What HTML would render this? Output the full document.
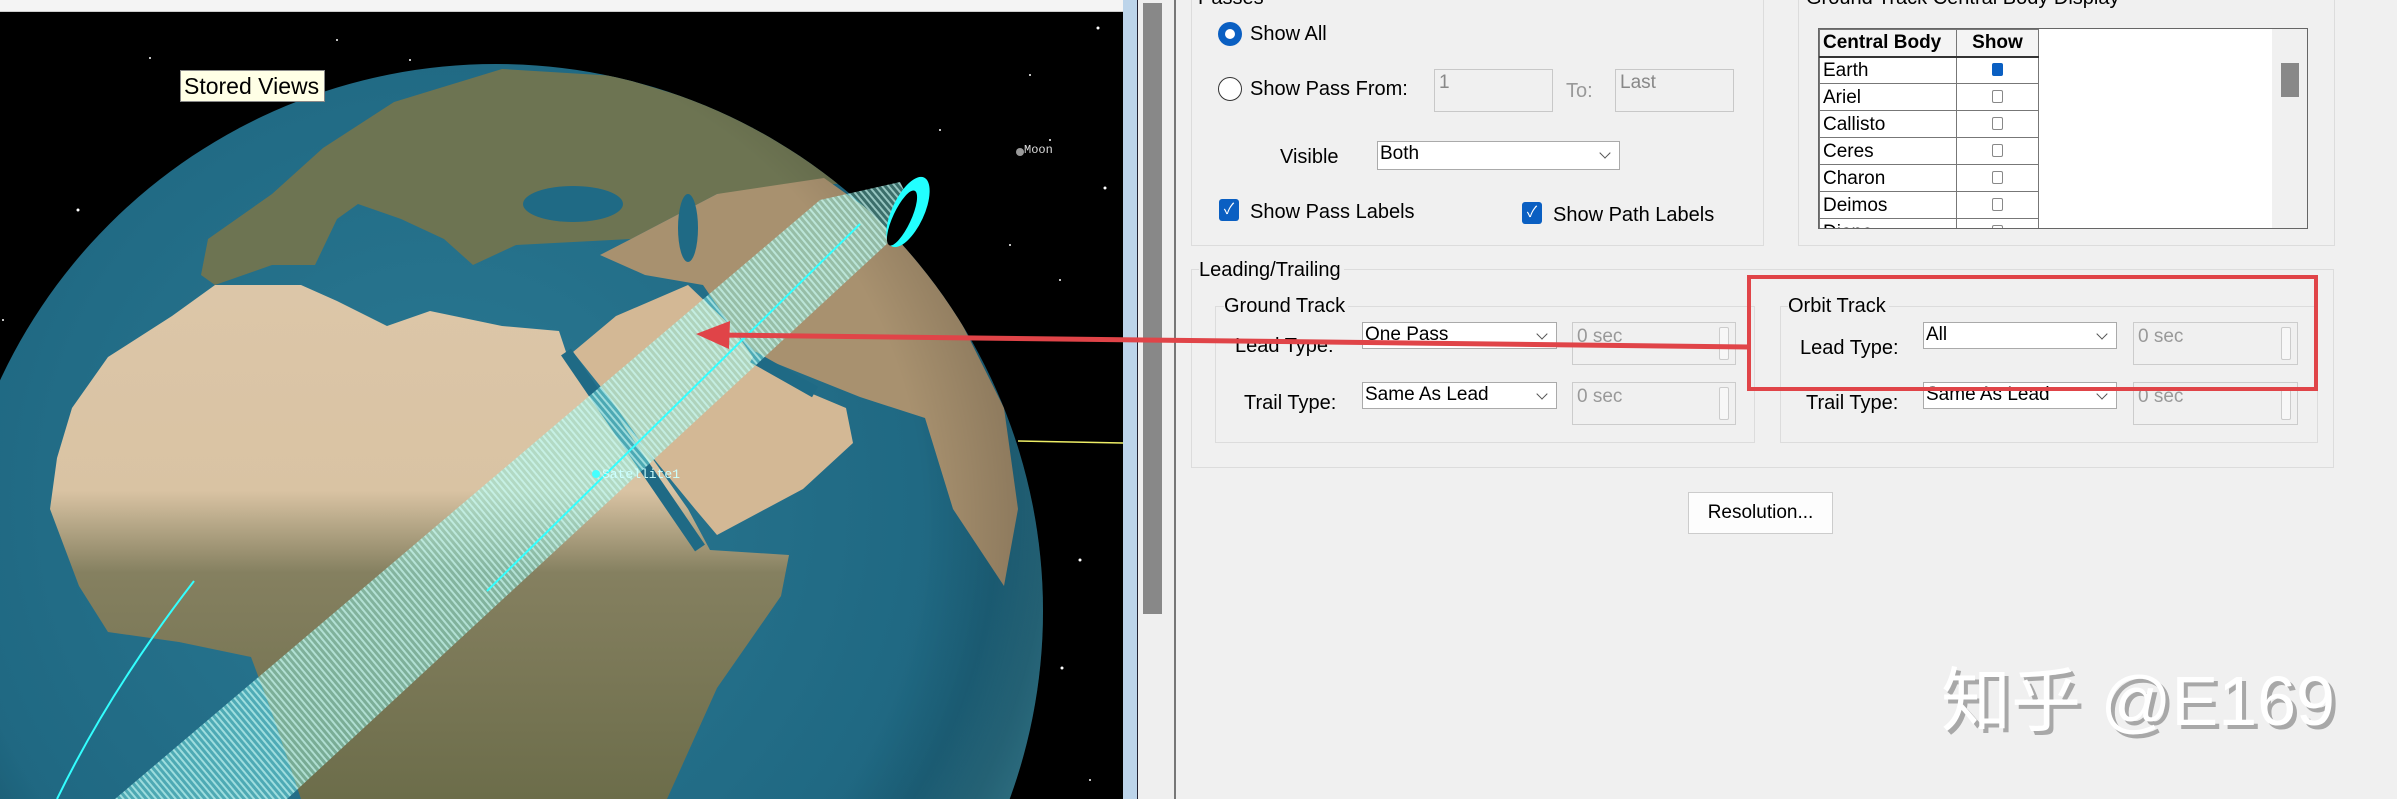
<!DOCTYPE html>
<html style="overflow:hidden"><head><meta charset="utf-8"><style>
*{margin:0;padding:0;box-sizing:border-box}
body{width:2397px;height:799px;overflow:hidden;background:#f0f0f0;font-family:"Liberation Sans","Noto Sans CJK SC",sans-serif;position:relative;color:#000}
.a{position:absolute}
.t{position:absolute;font-size:20px;white-space:nowrap;line-height:1}
.box{position:absolute;border:1px solid #dcdcdc}
.inp{position:absolute;background:#f0f0f0;border:1px solid #c8c8c8;font-size:19px;color:#888;padding:2px 4px}
.sel{position:absolute;background:#fff;border:1px solid #aaa;font-size:19px;padding:1px 2px;line-height:22px}
.sel:after{content:"";position:absolute;right:10px;top:7px;width:7px;height:7px;border-right:1px solid #555;border-bottom:1px solid #555;transform:rotate(45deg)}
.spin{position:absolute;border:1px solid #ccc;background:#f0f0f0;font-size:19px;color:#999;padding:3px 4px}
.spin i{position:absolute;right:6px;top:4px;width:10px;bottom:4px;border:1px solid #ccc;border-radius:2px;background:#f7f7f7}
.cb{position:absolute;width:20px;height:22px;background:#0a5fc2;border-radius:3px;color:#fff;font-size:15px;text-align:center;line-height:22px}
table{border-collapse:collapse}
td{border:1px solid #777;font-size:19px;height:27px;padding:0 3px;line-height:25px}
</style></head><body>
<div class="a" style="left:0;top:0;width:1123px;height:799px;background:#000;overflow:hidden">
<svg width="1123" height="799" style="position:absolute;left:0;top:0">
<defs>
<radialGradient id="oc" cx="0.45" cy="0.4" r="0.6"><stop offset="0" stop-color="#2b7a94"/><stop offset="0.85" stop-color="#1e6680"/><stop offset="1" stop-color="#3a8aa0"/></radialGradient>
<radialGradient id="sh" cx="0.45" cy="0.42" r="0.55"><stop offset="0.8" stop-color="#000" stop-opacity="0"/><stop offset="1" stop-color="#000" stop-opacity="0.2"/></radialGradient>
<linearGradient id="af" x1="0" y1="0" x2="0" y2="1"><stop offset="0" stop-color="#dcc6a8"/><stop offset="0.4" stop-color="#d9c3a3"/><stop offset="0.56" stop-color="#858060"/><stop offset="1" stop-color="#6c6d4a"/></linearGradient>
<pattern id="st" width="5" height="5" patternUnits="userSpaceOnUse" patternTransform="rotate(-40)"><rect width="5" height="5" fill="rgba(130,245,235,0.45)"/><rect width="2" height="5" fill="rgba(210,255,250,0.6)"/></pattern>
<clipPath id="gc"><circle cx="496" cy="611" r="547"/></clipPath>
</defs>
<g fill="#fff"><circle cx="1098" cy="28" r="1.5"/><circle cx="1105" cy="188" r="1.5"/><circle cx="1030" cy="75" r="1"/><circle cx="940" cy="130" r="1"/><circle cx="1060" cy="280" r="1"/><circle cx="1080" cy="560" r="1.5"/><circle cx="1062" cy="668" r="1.5"/><circle cx="1090" cy="780" r="1"/><circle cx="337" cy="40" r="1"/><circle cx="150" cy="58" r="1"/><circle cx="78" cy="210" r="1.5"/><circle cx="3" cy="320" r="1"/><circle cx="1010" cy="245" r="1"/><circle cx="1050" cy="140" r="1"/><circle cx="410" cy="60" r="1"/></g>
<circle cx="496" cy="611" r="547" fill="url(#oc)"/>
<g clip-path="url(#gc)">
<path d="M208,239 L272,194 L323,148 L394,102 L502,69 L616,76 L717,107 L803,153 L846,183 L717,194 L631,239 L516,245 L473,265 L444,239 L401,219 L358,204 L337,219 L315,265 L272,265 L215,285 L201,275 Z" fill="#6d7452"/>
<path d="M631,239 L717,194 L824,178 L896,229 L953,306 L1004,408 L1018,509 L1004,586 L953,509 L925,418 L860,397 L810,377 L760,357 L731,326 L703,285 L645,275 L600,255 Z" fill="#a8916f"/>
<path d="M172,316 L215,285 L301,285 L337,301 L387,326 L430,311 L502,326 L559,331 L566,352 L609,408 L645,448 L688,509 L710,550 L789,555 L781,596 L717,688 L667,799 L301,799 L272,713 L251,657 L179,642 L108,632 L79,586 L50,509 L57,458 L72,408 L108,357 Z" fill="url(#af)"/>
<path d="M616,316 L688,285 L731,326 L760,367 L796,387 L846,408 L853,443 L803,489 L717,535 L695,509 L645,448 L609,397 L573,352 Z" fill="#d3b895"/>
<g fill="#1f6a85">
<ellipse cx="573" cy="204" rx="50" ry="18"/>
<ellipse cx="688" cy="228" rx="10" ry="34"/>
<path d="M566,352 L700,548" stroke="#1f6a85" stroke-width="12"/>
<path d="M753,357 L815,392" stroke="#1f6a85" stroke-width="12"/>
</g>
</g>
<circle cx="496" cy="611" r="547" fill="url(#sh)"/>
<polygon points="820,200 900,182 917,216 287,799 115,799" fill="url(#st)"/>
<path d="M860,224 L487,591" stroke="#3ff" stroke-width="2"/>
<path d="M194,581 Q110,690 57,799" stroke="#3ff" stroke-width="2" fill="none"/>
<ellipse cx="908" cy="212" rx="16" ry="38" transform="rotate(25 908 212)" fill="#2ff"/>
<ellipse cx="902" cy="218" rx="9" ry="30" transform="rotate(25 902 218)" fill="#000"/>
<path d="M1018,441 L1123,443" stroke="#ee6" stroke-width="1.5"/>
<circle cx="596" cy="474" r="4" fill="#4ff"/>
<circle cx="1020" cy="152" r="4" fill="#999"/>
</svg>
<div class="a" style="left:0;top:0;width:1123px;height:12px;background:#f4f4f4;border-bottom:1px solid #ccc"></div>
<div class="a" style="left:180px;top:70px;width:145px;height:32px;background:#ffffe6;border:1px solid #888;font-size:23px;line-height:30px;padding-left:3px">Stored Views</div>
<div class="t" style="left:1024px;top:144px;font-size:12px;color:#ddd;font-family:'Liberation Mono',monospace">Moon</div>
<div class="t" style="left:602px;top:468px;font-size:13px;color:#cff;font-family:'Liberation Mono',monospace">Satellite1</div>
</div>
<div class="a" style="left:1123px;top:0;width:14px;height:799px;background:#bcd4ea"></div>
<div class="a" style="left:1137px;top:0;width:1px;height:799px;background:#223"></div>
<div class="a" style="left:1138px;top:0;width:36px;height:799px;background:#efefef"></div>
<div class="a" style="left:1143px;top:3px;width:19px;height:611px;background:#888"></div>
<div class="a" style="left:1174px;top:0;width:2px;height:799px;background:#777"></div>
<div class="box" style="left:1191px;top:-5px;width:573px;height:251px"></div>
<div class="t" style="left:1198px;top:-12px">Passes</div>
<div class="a" style="left:1218px;top:22px;width:24px;height:24px;border-radius:50%;background:#0a5fc2"><div class="a" style="left:7px;top:7px;width:10px;height:10px;border-radius:50%;background:#fff"></div></div>
<div class="t" style="left:1250px;top:24px">Show All</div>
<div class="a" style="left:1218px;top:77px;width:24px;height:24px;border-radius:50%;border:1px solid #333;background:#fff"></div>
<div class="t" style="left:1250px;top:79px">Show Pass From:</div>
<div class="inp" style="left:1434px;top:69px;width:119px;height:43px">1</div>
<div class="t" style="left:1566px;top:81px;color:#999">To:</div>
<div class="inp" style="left:1615px;top:69px;width:119px;height:43px">Last</div>
<div class="t" style="left:1280px;top:147px">Visible</div>
<div class="sel" style="left:1377px;top:141px;width:243px;height:29px">Both</div>
<div class="cb" style="left:1219px;top:199px">✓</div>
<div class="t" style="left:1250px;top:202px">Show Pass Labels</div>
<div class="cb" style="left:1522px;top:202px">✓</div>
<div class="t" style="left:1553px;top:205px">Show Path Labels</div>
<div class="box" style="left:1798px;top:-5px;width:537px;height:251px"></div>
<div class="t" style="left:1806px;top:-12px">Ground Track Central Body Display</div>
<div class="a" style="left:1818px;top:28px;width:490px;height:201px;background:#fff;border:1px solid #666;overflow:hidden">
<table style="background:#fff">
<tr><td style="width:137px;font-weight:bold;background:#f4f4f4;border-bottom:2px solid #333">Central Body</td><td style="width:82px;font-weight:bold;text-align:center;background:#f4f4f4;border-bottom:2px solid #333">Show</td></tr>
<tr><td>Earth</td><td style="text-align:center"><span style="display:inline-block;width:11px;height:13px;background:#0a5fc2;border-radius:2px"></span></td></tr>
<tr><td>Ariel</td><td style="text-align:center"><span style="display:inline-block;width:11px;height:13px;border:1px solid #888;border-radius:2px"></span></td></tr>
<tr><td>Callisto</td><td style="text-align:center"><span style="display:inline-block;width:11px;height:13px;border:1px solid #888;border-radius:2px"></span></td></tr>
<tr><td>Ceres</td><td style="text-align:center"><span style="display:inline-block;width:11px;height:13px;border:1px solid #888;border-radius:2px"></span></td></tr>
<tr><td>Charon</td><td style="text-align:center"><span style="display:inline-block;width:11px;height:13px;border:1px solid #888;border-radius:2px"></span></td></tr>
<tr><td>Deimos</td><td style="text-align:center"><span style="display:inline-block;width:11px;height:13px;border:1px solid #888;border-radius:2px"></span></td></tr>
<tr><td>Dione</td><td style="text-align:center"><span style="display:inline-block;width:11px;height:13px;border:1px solid #888;border-radius:2px"></span></td></tr>
</table>
<div class="a" style="left:453px;top:0;width:36px;height:200px;background:#f0f0f0"></div>
<div class="a" style="left:462px;top:34px;width:18px;height:34px;background:#888"></div>
</div>
<div class="box" style="left:1191px;top:269px;width:1143px;height:199px"></div>
<div class="t" style="left:1199px;top:260px;background:#f0f0f0;padding-right:3px">Leading/Trailing</div>
<div class="box" style="left:1215px;top:306px;width:540px;height:137px"></div>
<div class="t" style="left:1224px;top:296px;background:#f0f0f0;padding-right:3px">Ground Track</div>
<div class="t" style="left:1235px;top:336px">Lead Type:</div>
<div class="sel" style="left:1362px;top:322px;width:195px;height:27px">One Pass</div>
<div class="spin" style="left:1572px;top:322px;width:164px;height:43px">0 sec<i></i></div>
<div class="t" style="left:1244px;top:393px">Trail Type:</div>
<div class="sel" style="left:1362px;top:382px;width:195px;height:27px">Same As Lead</div>
<div class="spin" style="left:1572px;top:382px;width:164px;height:43px">0 sec<i></i></div>
<div class="box" style="left:1780px;top:306px;width:538px;height:137px"></div>
<div class="t" style="left:1788px;top:296px;background:#f0f0f0;padding-right:3px">Orbit Track</div>
<div class="t" style="left:1800px;top:338px">Lead Type:</div>
<div class="sel" style="left:1923px;top:322px;width:194px;height:27px">All</div>
<div class="spin" style="left:2133px;top:322px;width:165px;height:43px">0 sec<i></i></div>
<div class="t" style="left:1806px;top:393px">Trail Type:</div>
<div class="sel" style="left:1923px;top:382px;width:194px;height:27px">Same As Lead</div>
<div class="spin" style="left:2133px;top:382px;width:165px;height:43px">0 sec<i></i></div>
<div class="a" style="left:1688px;top:492px;width:145px;height:42px;background:#fdfdfd;border:1px solid #ccc;font-size:19px;text-align:center;line-height:40px">Resolution...</div>
<div class="a" style="left:1747px;top:275px;width:571px;height:116px;border:4px solid #e04448"></div>
<svg class="a" style="left:0;top:0" width="2397" height="799"><path d="M1749,347 L718,335" stroke="#e04448" stroke-width="5"/><polygon points="696,334 730,321 729,349" fill="#e04448"/></svg>
<div class="t" style="left:1945px;top:670px;font-size:70px;color:#a8a8a8">知乎 @E169</div>
<div class="t" style="left:1941px;top:666px;font-size:70px;color:#fff">知乎 @E169</div>
</body></html>
